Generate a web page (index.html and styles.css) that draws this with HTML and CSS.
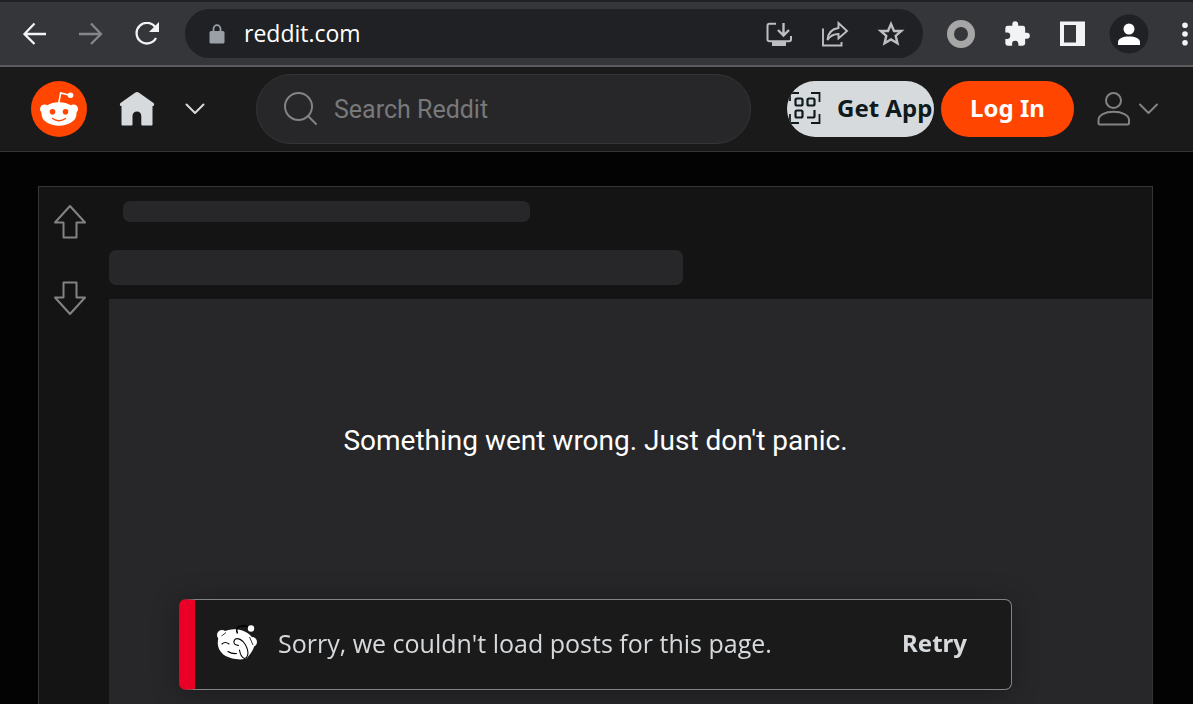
FILE: index.html
```html
<!DOCTYPE html>
<html lang="en">
<head>
<meta charset="utf-8">
<meta name="viewport" content="width=device-width, initial-scale=1">
<title>reddit.com</title>
<link rel="stylesheet" href="styles.css">
</head>
<body>
<div class="browser-bar">
  <div class="nav-buttons">
    <button class="icon-button" aria-label="Back"><svg width="24" height="24" viewBox="0 0 24 24" fill="none" stroke="#f1f3f4" stroke-width="2.3"><path d="M23 12H1.500M11.500 1.500L1.500 12L11.500 22"/></svg></button>
    <button class="icon-button" aria-label="Forward"><svg width="24" height="24" viewBox="0 0 24 24" fill="none" stroke="#85868a" stroke-width="2.300"><path d="M0 12H22M12 1.500L22 12L12 22"/></svg></button>
    <button class="icon-button" aria-label="Reload"><svg width="24" height="24" viewBox="0 0 24 24"><path d="M20.500 5.500A10.300 10.300 0 1 0 21 16" fill="none" stroke="#f1f3f4" stroke-width="2.300"/><path d="M24 0V10H14Z" fill="#f1f3f4"/></svg></button>
  </div>
  <div class="address">
    <svg width="16" height="20" viewBox="0 0 16 20"><path d="M4.500 8V5a3.500 3.800 0 0 1 7 0V8" fill="none" stroke="#9aa0a6" stroke-width="1.800"/><rect x=".5" y="7" width="15" height="12.500" rx="1.500" fill="#9aa0a6"/></svg>
    <input class="address-input" type="text" value="reddit.com" aria-label="Address">
    <div class="tool-group">
      <button class="icon-button" aria-label="Install app"><svg width="28" height="28" viewBox="0 0 28 28" fill="none" stroke="#bdbec1" stroke-width="2"><path d="M11 3.800H4.500Q2.500 3.800 2.500 6V19.500Q2.500 21.300 4.500 21.300H24Q26 21.300 26 19.500V16"/><path d="M18.500 3V15M13 10L18.500 15.500L24 10" stroke-width="2.400"/><path d="M7 24H21" stroke-width="4"/></svg></button>
      <button class="icon-button" aria-label="Share"><svg width="28" height="28" viewBox="0 0 28 28" fill="none" stroke="#bdbec1" stroke-width="1.900"><path d="M2 8.500V25.500H20.500V22M6.500 20C7 12.500 11 8.800 17.500 8V3L26 11L17.500 18.500V14C12.500 14 9 16 6.500 20Z"/></svg></button>
      <button class="icon-button" aria-label="Bookmark"><svg width="28" height="28" viewBox="0 0 28 28" fill="none" stroke="#bdbec1" stroke-width="2.400"><path d="M14 4L17 11H24.300L18.700 15.900L20.500 23.300L14 19.400L7.500 23.300L9.300 15.900L3.700 11H11Z"/></svg></button>
    </div>
  </div>
  <div class="tool-group extensions">
    <button class="icon-button" aria-label="Extension"><svg width="28" height="28" viewBox="0 0 28 28"><circle cx="14" cy="14" r="10.500" fill="none" stroke="#a6a6a6" stroke-width="7"/></svg></button>
    <button class="icon-button" aria-label="Extensions"><svg width="28" height="28" viewBox="0 0 24 24"><path d="M20.500 11H19V7a2 2 0 0 0-2-2h-4V3.500a2.500 2.500 0 0 0-5 0V5H4a2 2 0 0 0-2 2v3.800h1.500a2.700 2.700 0 0 1 0 5.400H2V20a2 2 0 0 0 2 2h3.800v-1.500a2.700 2.700 0 0 1 5.400 0V22H17a2 2 0 0 0 2-2v-4h1.500a2.500 2.500 0 0 0 0-5z" fill="#f1f3f4"/></svg></button>
    <button class="icon-button" aria-label="Side panel"><svg width="28" height="28" viewBox="0 0 28 28"><path fill="#f1f3f4" fill-rule="evenodd" d="M1 1.500H26V26H1ZM5 5V22.500H17V5Z"/></svg></button>
    <button class="icon-button profile" aria-label="Profile"><svg width="40" height="40" viewBox="0 0 40 40"><circle cx="20" cy="20" r="19.500" fill="#202124"/><circle cx="20" cy="15" r="5.500" fill="#fff"/><path d="M9 31V28C9 24.500 14 22.500 20 22.500S31 24.500 31 28V31Z" fill="#fff"/></svg></button>
    <button class="icon-button menu" aria-label="Menu"><svg width="8" height="28" viewBox="0 0 8 28" fill="#f1f3f4"><circle cx="4" cy="5.300" r="2.800"/><circle cx="4" cy="14" r="2.800"/><circle cx="4" cy="22.700" r="2.800"/></svg></button>
  </div>
</div>

<header class="site-header">
  <a class="logo" href="#" aria-label="Reddit home"><svg width="56" height="56" viewBox="0 0 56 56"><circle cx="28" cy="28" r="28" fill="#ff4500"/><path d="M27.500 23L29.700 12L38 14" fill="none" stroke="#fff" stroke-width="1.500"/><circle cx="39.500" cy="14.200" r="2.800" fill="#fff"/><circle cx="13.500" cy="28" r="4.500" fill="#fff"/><circle cx="42.500" cy="28" r="4.500" fill="#fff"/><ellipse cx="28" cy="33" rx="17.500" ry="11.800" fill="#fff"/><circle cx="21.500" cy="30.800" r="2.800" fill="#ff4500"/><circle cx="34.500" cy="30.800" r="2.800" fill="#ff4500"/><path d="M21.500 37.500Q28 42 34.500 37.500" fill="none" stroke="#ff4500" stroke-width="1.500" stroke-linecap="round"/></svg></a>
  <button class="icon-button home" aria-label="Home"><svg width="36" height="36" viewBox="0 0 36 36"><path d="M18 1Q19 1 20 1.800L34.500 12Q35.500 13 35 14.200L34.500 15H33.500V33.500Q33.500 34.500 32.500 34.500H23.300Q22.300 34.500 22.300 33.500V25Q22 20.500 18 20.500Q13.800 20.500 13.500 25V33.500Q13.500 34.500 12.500 34.500H3.500Q2.500 34.500 2.500 33.500V15H1.500L1 14.200Q.5 13 1.500 12L16 1.800Q17 1 18 1Z" fill="#d7dadc"/></svg></button>
  <button class="icon-button feeds" aria-label="Feeds"><svg width="20" height="20" viewBox="0 0 20 20" fill="none" stroke="#d7dadc" stroke-width="2" stroke-linecap="round" stroke-linejoin="round"><path d="M1.500 5.500L10 14L18.500 5.500"/></svg></button>
  <label class="search">
    <svg width="34" height="34" viewBox="0 0 34 34" fill="none" stroke="#818384" stroke-width="2" stroke-linecap="round"><circle cx="14.500" cy="14.500" r="13.500"/><path d="M24 24L32 32"/></svg>
    <input class="search-input" type="search" placeholder="Search Reddit" aria-label="Search Reddit">
  </label>
  <div class="actions">
    <button class="pill get-app"><svg width="32" height="32" viewBox="0 0 32 32" fill="none" stroke="#0f1a1c" stroke-width="1.800"><path d="M1 9V1H10M22 1H30.500V10M30.500 22V31H22M10 31H1V22"/><g stroke-width="2.200"><rect x="6.500" y="6.500" width="7" height="7" rx="1.500"/><rect x="18.500" y="6.500" width="7" height="7" rx="1.500"/><rect x="6.500" y="18.500" width="7" height="7" rx="1.500"/><path d="M25.500 18V24Q25.500 25.500 24 25.500H18"/></g></svg><span>Get App</span></button>
    <button class="pill log-in">Log In</button>
  </div>
  <button class="icon-button account" aria-label="Account"><svg width="34" height="34" viewBox="0 0 34 34" fill="none" stroke="#818384" stroke-width="2" stroke-linejoin="round"><circle cx="16.500" cy="8.500" r="7.500"/><path d="M1.500 31V28C1.500 23 8 19.800 16.500 19.800S32 23 32 28V31Q32 32.500 30.500 32.500H3Q1.500 32.500 1.500 31Z"/></svg><svg width="20" height="20" viewBox="0 0 20 20" fill="none" stroke="#818384" stroke-width="2" stroke-linecap="round" stroke-linejoin="round"><path d="M1 5.500L9.500 14L18 5.500"/></svg></button>
</header>

<main class="page">
  <article class="post">
    <div class="votes">
      <button class="icon-button" aria-label="Upvote"><svg width="32" height="34" viewBox="0 0 32 34" fill="none" stroke="#818384" stroke-width="2" stroke-linejoin="round"><path d="M16 1L31 17.500H22.500V32.500H9.500V17.500H1Z"/></svg></button>
      <button class="icon-button" aria-label="Downvote"><svg width="32" height="34" viewBox="0 0 32 34" fill="none" stroke="#818384" stroke-width="2" stroke-linejoin="round"><path d="M16 33L31 16.500H22.500V1.500H9.500V16.500H1Z"/></svg></button>
    </div>
    <div class="content">
      <div class="line meta"></div>
      <div class="line title"></div>
      <div class="media"></div>
    </div>
    <p class="message">Something went wrong. Just don't panic.</p>
  </article>
</main>

<div class="toast" role="alert">
  <svg class="toast-icon" width="42" height="38" viewBox="0 0 42 38"><circle cx="6" cy="11" r="5" fill="#fff"/><circle cx="36" cy="18" r="5" fill="#fff"/><path d="M2 16C3 8 13 4 22 5.500C32 7 38 13 38.500 20C38 26 34 30 31 34C26 37 14 35 8 31C3 27 1 22 2 16Z" fill="#fff"/><path d="M21.500 9.500Q19 3 25 2Q29 1.500 32 3" fill="none" stroke="#000" stroke-width="1.500"/><circle cx="35" cy="4.500" r="3.200" fill="#fff"/><path d="M22.500 21.500L19 20.500Q16.500 17.500 19.500 15Q23 13.500 27 17.500Q31.500 22.500 32 29Q31.500 34 28.500 34.500Q24.500 33 23.500 26" fill="#fff" stroke="#000" stroke-width="1.100" stroke-linecap="round" stroke-linejoin="round"/><path d="M6 20Q9 17 13 20M12 27.500Q16 30 20.500 29.500" fill="none" stroke="#000" stroke-width="1.100" stroke-linecap="round"/><path d="M5.500 12L10 8.500M33.500 13L37 21" fill="none" stroke="#000" stroke-width=".8"/></svg>
  <span class="toast-text">Sorry, we couldn't load posts for this page.</span>
  <button class="retry">Retry</button>
</div>
</body>
</html>
```
FILE: styles.css
```css
* { box-sizing: border-box; }

body {
  margin: 0;
  height: 100vh;
  display: flex;
  flex-direction: column;
  overflow: hidden;
  background: #030303;
  color: #d7dadc;
  font-family: "Noto Sans", sans-serif;
  font-size: 24px;
}

button, input { font: inherit; color: inherit; }
button { border: 0; padding: 0; background: none; cursor: pointer; }
input { border: 0; padding: 0; background: none; outline: 0; min-width: 0; }
svg { display: block; flex: none; }

.icon-button { display: flex; align-items: center; justify-content: center; flex: none; }

.browser-bar {
  display: flex;
  align-items: center;
  flex: none;
  padding: 7px 4px 7px 23px;
  border-top: 2px solid #202124;
  border-bottom: 2px solid #5c5d60;
  background: #35363a;
}
.nav-buttons { display: flex; gap: 32px; margin-right: 26px; }
.address {
  display: flex;
  align-items: center;
  flex: 1;
  height: 49px;
  padding: 0 18px 0 24px;
  border-radius: 25px;
  background: #202124;
}
.address-input {
  flex: 1;
  margin-left: 19px;
  padding-bottom: 2px;
  color: #fff;
  font-family: "Open Sans", "Noto Sans", sans-serif;
  font-size: 23px;
}
.tool-group { display: flex; align-items: center; gap: 28px; }
.extensions { margin-left: 24px; }
.profile { width: 28px; height: 28px; }
.menu { margin-left: 10px; }

.site-header {
  display: flex;
  align-items: center;
  flex: none;
  padding: 7px 34px 7px 31px;
  border-bottom: 1px solid #343536;
  background: #1a1a1b;
}
.home { margin-left: 32px; }
.feeds { margin-left: 30px; }
.search {
  display: flex;
  align-items: center;
  flex: 1;
  gap: 16px;
  height: 70px;
  margin: 0 36px 0 51px;
  padding: 0 27px;
  border: 1px solid #343536;
  border-radius: 35px;
  background: #272729;
}
.search-input { flex: 1; font-family: Roboto, sans-serif; font-size: 25px; }
.search-input::placeholder { color: #77797a; opacity: 1; }
.actions { display: flex; gap: 7px; }
.pill {
  height: 56px;
  padding-bottom: 4px;
  border-radius: 28px;
  font-weight: 700;
  white-space: nowrap;
}
.get-app {
  display: flex;
  align-items: center;
  gap: 16px;
  width: 147px;
  padding: 0 0 2px 2px;
  overflow: hidden;
  background: #d7dadc;
  color: #0f1a1c;
}
.get-app span { padding-bottom: 2px; }
.log-in { width: 133px; background: #ff4500; color: #fff; }
.account { gap: 8px; margin-left: 23px; }

.page { display: flex; flex: 1; padding: 34px 40px 0 38px; }
.post {
  position: relative;
  display: flex;
  flex: 1;
  border: 1px solid #343536;
  border-bottom: 0;
  background: #141415;
}
.votes {
  display: flex;
  flex-direction: column;
  align-items: center;
  gap: 42px;
  width: 70px;
  padding: 18px 8px 0 0;
}
.content { display: flex; flex-direction: column; flex: 1; padding-top: 14px; }
.line { border-radius: 7px; background: #272729; }
.meta { width: 39%; height: 21px; margin-left: 14px; }
.title { width: 55%; height: 35px; margin: 28px 0 14px; }
.media { flex: 1; background: #272729; }
.message {
  position: absolute;
  inset: 0;
  display: flex;
  align-items: center;
  justify-content: center;
  margin: 0;
  padding-bottom: 10px;
  color: #fff;
  font-family: Roboto, sans-serif;
  font-size: 28px;
}

.toast {
  position: fixed;
  right: 181px;
  bottom: 14px;
  left: 179px;
  display: flex;
  align-items: center;
  height: 91px;
  padding: 0 44px 4px 21px;
  border: 1px solid #818384;
  border-left: 16px solid #ea0027;
  border-radius: 7px;
  background: #1a1a1b;
  box-shadow: 0 2px 28px rgba(0, 0, 0, 0.3);
}
.toast-text {
  flex: 1;
  margin-left: 20px;
  font-family: "Open Sans", "Noto Sans", sans-serif;
  font-size: 25px;
}
.retry { font-weight: 700; }
```
